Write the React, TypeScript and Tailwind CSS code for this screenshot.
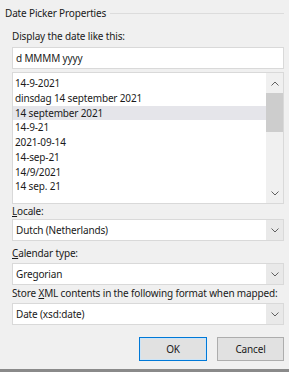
const formats = [
  "14-9-2021",
  "dinsdag 14 september 2021",
  "14 september 2021",
  "14-9-21",
  "2021-09-14",
  "14-sep-21",
  "14/9/2021",
  "14 sep. 21",
]

function Chevron({ up = false }: { up?: boolean }) {
  return (
    <svg width="8" height="5" viewBox="0 0 8 5" className={up ? "rotate-180" : ""}>
      <path d="M0.5 0.5 L4 4 L7.5 0.5" fill="none" stroke="#606060" strokeWidth="1" />
    </svg>
  )
}

function Dropdown({ value }: { value: string }) {
  return (
    <div className="flex h-[22px] border border-[#d9d9d9] bg-white">
      <div className="flex-1 pl-[3px] leading-[20px] text-[#1a1a1a]">{value}</div>
      <div className="flex w-[17px] items-center justify-center bg-[#e9e9e9]">
        <Chevron />
      </div>
    </div>
  )
}

export default function App() {
  const selected = 2

  return (
    <div className="flex h-[372px] w-[289px] flex-col bg-[#f0f0f0] text-[10px] tracking-[-0.15px] text-[#1a1a1a]" style={{ fontFamily: '"Noto Sans", "Open Sans", sans-serif' }}>
      <div className="flex flex-1 flex-col pl-[5px] pr-[5px] pt-[5px]">
        <div className="flex items-center gap-[4px] h-[17px]">
          <span>Date Picker Properties</span>
          <div className="h-px flex-1 bg-[#dcdcdc]" />
        </div>

        <div className="flex flex-col pl-[7px]">
          <div className="mt-[6px] h-[17px] leading-[17px]">Display the date like this:</div>
          <div className="mt-[2px] h-[22px] border border-[#d9d9d9] bg-white pl-[3px] leading-[20px]">d MMMM yyyy</div>

          <div className="mt-[3px] flex h-[132px] border border-[#d9d9d9] bg-white">
            <div className="flex-1 pt-[3px]">
              {formats.map((f, i) => (
                <div key={f} className={`h-[14.75px] pl-[2px] leading-[15px] ${i === selected ? "bg-[#e5e5ea]" : ""}`}>
                  {f}
                </div>
              ))}
            </div>
            <div className="flex w-[17px] flex-col bg-[#f0f0f0]">
              <div className="flex h-[20px] items-center justify-center">
                <Chevron up />
              </div>
              <div className="h-[39px] bg-[#cdcdcd]" />
              <div className="flex-1" />
              <div className="flex h-[20px] items-center justify-center">
                <Chevron />
              </div>
            </div>
          </div>

          <div className="h-[15px] leading-[15px]"><u>L</u>ocale:</div>
          <Dropdown value="Dutch (Netherlands)" />

          <div className="mt-[4px] h-[17px] leading-[17px]"><u>C</u>alendar type:</div>
          <div className="mt-[1px]"><Dropdown value="Gregorian" /></div>

          <div className="h-[17px] whitespace-nowrap leading-[17px]">Store <u>X</u>ML contents in the following format when mapped:</div>
          <div className="mt-[1px]"><Dropdown value="Date (xsd:date)" /></div>

          <div className="mt-[12px] flex justify-end gap-[10px]">
            <button className="h-[24px] w-[68px] border border-[#0078d7] bg-[#e1e1e1] leading-[22px] shadow-[inset_0_0_0_1px_#cce4f7]">OK</button>
            <button className="h-[24px] w-[67px] border border-[#adadad] bg-[#e1e1e1] leading-[22px]">Cancel</button>
          </div>
        </div>
      </div>
      <div className="h-[3px] bg-[#8a8a8a]" />
    </div>
  )
}
